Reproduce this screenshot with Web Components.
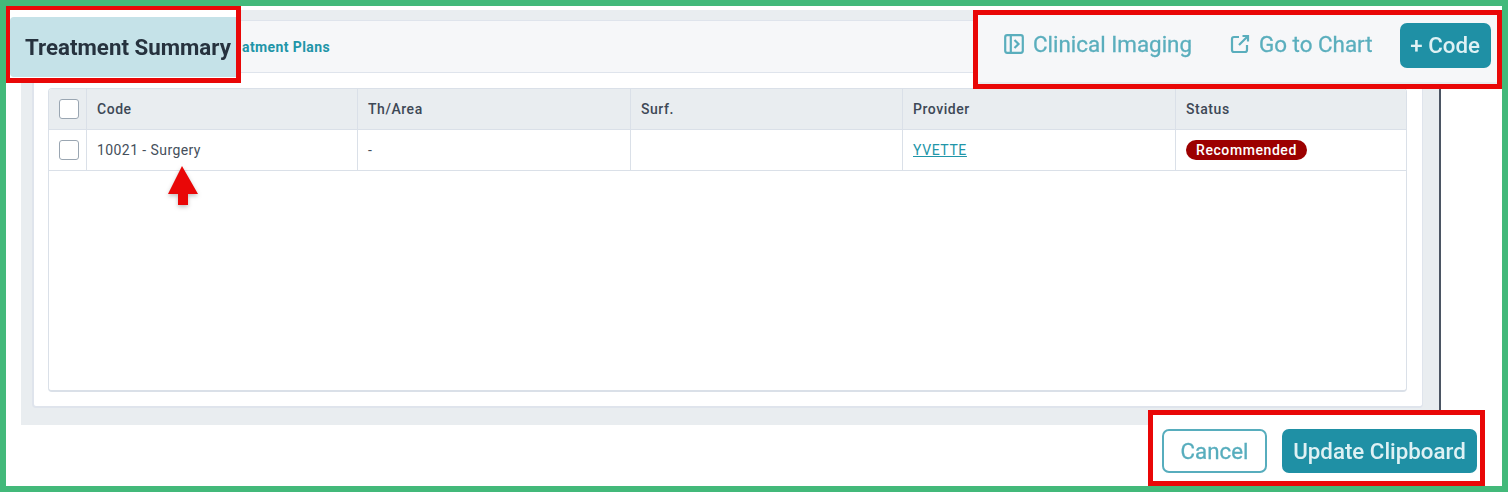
<!DOCTYPE html>
<html>
<head>
<meta charset="utf-8">
<title>Treatment Summary</title>
<style>
  html, body { margin: 0; padding: 0; background: #fff; }
  body { font-family: Roboto, "Liberation Sans", sans-serif; }
</style>
</head>
<body>
<app-frame>
  <summary-panel>
    <tab-header>atment Plans</tab-header>
    <code-table>
      <code-row head><span>Code</span><span>Th/Area</span><span>Surf.</span><span>Provider</span><span>Status</span></code-row>
      <code-row>
        <span>10021 - Surgery</span><span>-</span><span></span>
        <a href="#">YVETTE</a>
        <status-badge>Recommended</status-badge>
      </code-row>
    </code-table>
  </summary-panel>

  <red-callout style="left:-1px;top:-1px;width:236px;height:78px">
    <summary-tab>Treatment Summary</summary-tab>
  </red-callout>
  <red-callout style="left:967px;top:4px;width:529px;height:79px">
    <top-actions>
      <link-action icon="panel">Clinical Imaging</link-action>
      <link-action icon="open">Go to Chart</link-action>
      <big-button size="small">+ Code</big-button>
    </top-actions>
  </red-callout>
  <red-callout style="left:1142px;top:404px;width:337px;height:76px">
    <action-bar>
      <big-button variant="outline">Cancel</big-button>
      <big-button>Update Clipboard</big-button>
    </action-bar>
  </red-callout>
  <up-arrow></up-arrow>
</app-frame>

<script>
class AppFrame extends HTMLElement {
  constructor() {
    super();
    this.attachShadow({ mode: 'open' }).innerHTML = `
      <style>
        :host {
          display: block;
          position: relative;
          box-sizing: border-box;
          width: 1508px;
          height: 492px;
          border: 6px solid #43b97a;
          background: #fff;
          overflow: hidden;
        }
      </style>
      <slot></slot>`;
  }
}
customElements.define('app-frame', AppFrame);

class SummaryPanel extends HTMLElement {
  constructor() {
    super();
    this.attachShadow({ mode: 'open' }).innerHTML = `
      <style>
        :host {
          display: block;
          box-sizing: border-box;
          margin: 4px 0 0 15px;
          width: 1420px;
          height: 415px;
          padding: 10px 16px 0 11px;
          background: #e9edf0;
          border-right: 2px solid #4b5563;
        }
        #card {
          height: 388px;
          box-sizing: border-box;
          background: #fff;
          border: 1px solid #dfe4ec;
          border-width: 1px 1px 2px 2px;
          border-radius: 4px;
        }
      </style>
      <div id="card"><slot></slot></div>`;
  }
}
customElements.define('summary-panel', SummaryPanel);

class TabHeader extends HTMLElement {
  constructor() {
    super();
    this.attachShadow({ mode: 'open' }).innerHTML = `
      <style>
        :host {
          display: flex;
          align-items: center;
          box-sizing: border-box;
          height: 52px;
          padding-left: 208px;
          background: #f6f7f9;
          border-bottom: 1px solid #dfe4ec;
          border-radius: 3px 3px 0 0;
          font: 700 14px Roboto, sans-serif;
          letter-spacing: .4px;
          color: #2195a8;
        }
      </style>
      <slot></slot>`;
  }
}
customElements.define('tab-header', TabHeader);

class CodeTable extends HTMLElement {
  constructor() {
    super();
    this.attachShadow({ mode: 'open' }).innerHTML = `
      <style>
        :host {
          display: block;
          box-sizing: border-box;
          height: 304px;
          margin: 15px 15px 0 14px;
          background: #fff;
          border: 1px solid #dae0e8;
          border-width: 1px 1px 2px 1px;
          border-radius: 4px;
          overflow: hidden;
        }
      </style>
      <slot></slot>`;
  }
}
customElements.define('code-table', CodeTable);

class CodeRow extends HTMLElement {
  constructor() {
    super();
    this.attachShadow({ mode: 'open' }).innerHTML = `
      <style>
        :host {
          display: grid;
          grid-template-columns: 38px 271px 273px 272px 273px 1fr;
          height: 41px;
          box-sizing: border-box;
          border-bottom: 1px solid #dae0e8;
          font: 400 14px Roboto, sans-serif;
          letter-spacing: .42px;
          color: #454f5b;
        }
        :host([head]) {
          background: #e9edf0;
          font-weight: 500;
          letter-spacing: .55px;
          color: #3d4856;
        }
        .cell {
          display: flex;
          align-items: center;
          padding-left: 10px;
          border-right: 1px solid #dae0e8;
        }
        .cell:last-child { border-right: 0; }
        #check { padding: 0 0 0 3px; justify-content: center; }
        #box {
          width: 18px;
          height: 18px;
          flex: none;
          background: #fff;
          border: 1px solid #9aa6b2;
          border-radius: 3px;
        }
      </style>
      <div class="cell" id="check"><div id="box"></div></div>
      <div class="cell"><slot name="c0"></slot></div>
      <div class="cell"><slot name="c1"></slot></div>
      <div class="cell"><slot name="c2"></slot></div>
      <div class="cell"><slot name="c3"></slot></div>
      <div class="cell"><slot name="c4"></slot></div>`;
  }
  connectedCallback() {
    [...this.children].forEach((el, i) => el.slot = 'c' + i);
    const link = this.querySelector('a');
    if (link) {
      link.style.color = '#2195a8';
      link.style.letterSpacing = '.6px';
    }
  }
}
customElements.define('code-row', CodeRow);

class StatusBadge extends HTMLElement {
  constructor() {
    super();
    this.attachShadow({ mode: 'open' }).innerHTML = `
      <style>
        :host {
          display: inline-block;
          height: 20px;
          padding: 0 10px;
          border-radius: 10px;
          background: #9c0000;
          color: #fff;
          font: 500 14px/20px Roboto, sans-serif;
          letter-spacing: .58px;
        }
      </style>
      <slot></slot>`;
  }
}
customElements.define('status-badge', StatusBadge);

class BigButton extends HTMLElement {
  constructor() {
    super();
    this.attachShadow({ mode: 'open' }).innerHTML = `
      <style>
        :host {
          display: inline-flex;
          flex: none;
          align-items: center;
          justify-content: center;
          box-sizing: border-box;
          width: 195px;
          height: 44px;
          border-radius: 7px;
          border: 2px solid #1f90a5;
          background: #1f90a5;
          color: #dff1f4;
          font: 500 22.3px Roboto, sans-serif;
          white-space: nowrap;
          filter: blur(.3px);
        }
        :host([variant=outline]) {
          width: 105px;
          background: #fff;
          border-color: #57adbd;
          color: #57adbd;
          font-weight: 400;
          -webkit-text-stroke: .3px #57adbd;
        }
        :host([size=small]) { width: 91px; height: 45px; padding-bottom: 2px; }
      </style>
      <slot></slot>`;
  }
}
customElements.define('big-button', BigButton);

class ActionBar extends HTMLElement {
  constructor() {
    super();
    this.attachShadow({ mode: 'open' }).innerHTML = `
      <style>
        :host {
          display: flex;
          justify-content: flex-end;
          gap: 15px;
          padding: 14px 3px 0 0;
        }
      </style>
      <slot></slot>`;
  }
}
customElements.define('action-bar', ActionBar);

class RedCallout extends HTMLElement {
  constructor() {
    super();
    this.attachShadow({ mode: 'open' }).innerHTML = `
      <style>
        :host {
          display: block;
          position: absolute;
          box-sizing: border-box;
          border: 5px solid #e90707;
          background: #fff;
        }
      </style>
      <slot></slot>`;
  }
}
customElements.define('red-callout', RedCallout);

class SummaryTab extends HTMLElement {
  constructor() {
    super();
    this.attachShadow({ mode: 'open' }).innerHTML = `
      <style>
        :host {
          display: flex;
          align-items: center;
          box-sizing: border-box;
          height: 60px;
          margin-top: 7px;
          padding-left: 15px;
          border-radius: 4px 0 0 4px;
          background: #c5e2e8;
          color: #26323e;
          font: 700 22.3px Roboto, sans-serif;
          white-space: nowrap;
        }
        span { filter: blur(.3px); }
      </style>
      <span><slot></slot></span>`;
  }
}
customElements.define('summary-tab', SummaryTab);

class TopActions extends HTMLElement {
  constructor() {
    super();
    this.attachShadow({ mode: 'open' }).innerHTML = `
      <style>
        :host {
          display: flex;
          align-items: center;
          box-sizing: border-box;
          height: 69px;
          padding: 0 6px 6px 26px;
          background: #f6f7f9;
          border-bottom: 2px solid #e9edf0;
        }
        ::slotted(link-action) { margin: 0 38px 3px 0; }
        ::slotted(link-action:nth-child(2)) { margin-right: 27px; }
      </style>
      <slot></slot>`;
  }
}
customElements.define('top-actions', TopActions);

const ICONS = {
  panel: '<rect x="1.2" y="1.2" width="17.6" height="17.6" rx="2"/><path d="M6.8 2v16M10.5 6l4 4-4 4"/>',
  open: '<path d="M9 3H4a2 2 0 0 0-2 2v11a2 2 0 0 0 2 2h11a2 2 0 0 0 2-2v-5"/><path d="M12.5 2H18v5.5M18 2l-9 9"/>'
};

class LinkAction extends HTMLElement {
  constructor() {
    super();
    this.attachShadow({ mode: 'open' }).innerHTML = `
      <style>
        :host {
          display: inline-flex;
          align-items: center;
          gap: 9px;
          color: #5aaebd;
          -webkit-text-stroke: .3px #5aaebd;
          font: 400 22.4px Roboto, sans-serif;
          white-space: nowrap;
          filter: blur(.3px);
        }
        svg {
          width: 20px;
          height: 20px;
          fill: none;
          stroke: #5aaebd;
          stroke-width: 2.2;
        }
      </style>
      <svg viewBox="0 0 20 20">${ICONS[this.getAttribute('icon')] || ''}</svg>
      <slot></slot>`;
  }
}
customElements.define('link-action', LinkAction);

class UpArrow extends HTMLElement {
  constructor() {
    super();
    this.attachShadow({ mode: 'open' }).innerHTML = `
      <style>
        :host {
          display: block;
          position: absolute;
          left: 162px;
          top: 160px;
          width: 30px;
          height: 39px;
          filter: drop-shadow(0 2px 2px rgba(0,0,0,.25));
        }
        svg { display: block; }
      </style>
      <svg width="30" height="39" viewBox="0 0 30 39"><path fill="#e90707" d="M14 0 30 28H20V39H10V28H0Z"/></svg>`;
  }
}
customElements.define('up-arrow', UpArrow);
</script>
</body>
</html>
